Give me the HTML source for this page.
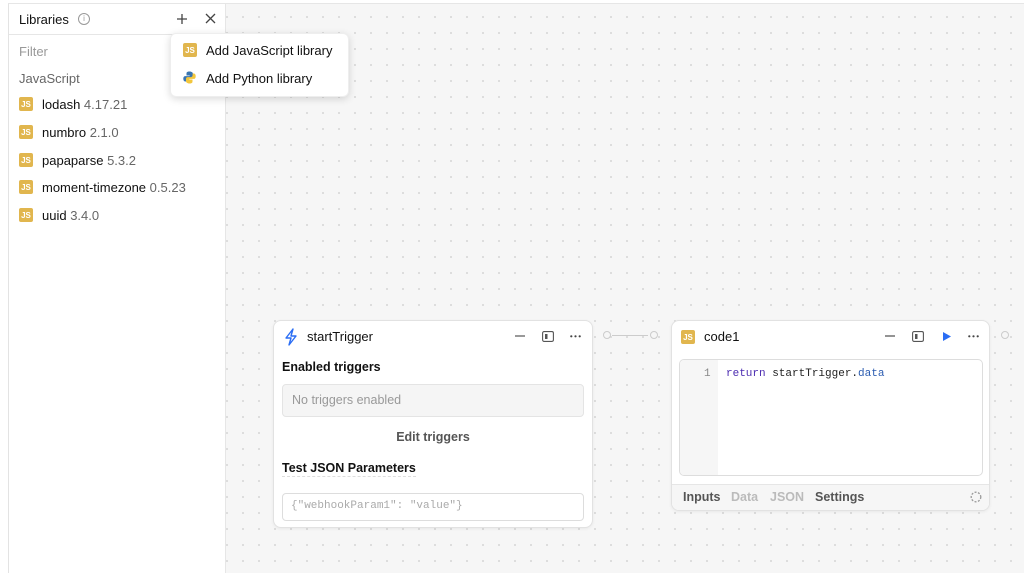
<!DOCTYPE html>
<html><head><meta charset="utf-8"><style>
*{box-sizing:border-box;margin:0;padding:0}
body{width:1024px;height:573px;overflow:hidden;background:#fff;font-family:"Liberation Sans",sans-serif;position:relative;color:#111}
.canvas{position:absolute;left:226px;top:3px;right:0;bottom:0;background-color:#f6f6f6;background-image:radial-gradient(circle,#d6d6d6 0.8px,transparent 1.1px);background-size:16px 16px;background-position:-7px 5px;border-top:1px solid #e6e6e6}
.panel{position:absolute;left:8px;top:3px;width:218px;bottom:0;background:#fff;border-left:1px solid #e3e3e3;border-top:1px solid #e6e6e6;border-right:1px solid #e6e6e6}
.ph{height:31px;border-bottom:1px solid #e6e6e6;position:relative}
.ph .t{position:absolute;left:10px;top:8px;font-size:13px}
.js{display:inline-block;width:14px;height:14px;background:#e1b64e;border-radius:2px;color:#fff;font-size:8px;font-weight:bold;text-align:center;line-height:15px;vertical-align:middle}
.li{position:absolute;left:10px;font-size:13px}
.li .js{margin-right:9px;margin-top:-3px}
.v{color:#666}
.menu{position:absolute;left:170px;top:33px;width:179px;height:64px;background:#fff;border-radius:6px;box-shadow:0 2px 8px rgba(0,0,0,.15);border:1px solid #eee}
.menu div{position:absolute;left:12px;font-size:13px}
.node{position:absolute;background:#fff;border:1px solid #e2e2e2;border-radius:8px;box-shadow:0 1px 3px rgba(0,0,0,.06)}
.abs{position:absolute}
</style></head><body>
<div class="canvas"></div>
<div class="panel">
 <div class="ph"><span class="t">Libraries</span>
  <span class="abs" style="left:69px;top:9px;width:12px;height:12px;border:1px solid #999;border-radius:50%;font-size:8px;color:#999;text-align:center;line-height:10px">i</span>
  <svg class="abs" style="left:167px;top:9px" width="12" height="12"><path d="M6 1v10M1 6h10" stroke="#444" stroke-width="1.3"/></svg>
  <svg class="abs" style="left:196px;top:9px" width="11" height="11"><path d="M1 1l9 9M10 1l-9 9" stroke="#444" stroke-width="1.3"/></svg>
 </div>
 <div class="li" style="top:40px;color:#999">Filter</div>
 <div class="li" style="top:67px;color:#666">JavaScript</div>
 <div class="li" style="top:93px"><span class="js">JS</span>lodash <span class="v">4.17.21</span></div>
 <div class="li" style="top:121px"><span class="js">JS</span>numbro <span class="v">2.1.0</span></div>
 <div class="li" style="top:149px"><span class="js">JS</span>papaparse <span class="v">5.3.2</span></div>
 <div class="li" style="top:176px"><span class="js">JS</span>moment-timezone <span class="v">0.5.23</span></div>
 <div class="li" style="top:204px"><span class="js">JS</span>uuid <span class="v">3.4.0</span></div>
</div>
<div class="menu">
 <div style="top:9px"><span class="js" style="margin-right:9px;margin-top:-3px">JS</span>Add JavaScript library</div>
 <div style="top:37px"><svg width="14" height="14" style="vertical-align:middle;margin-right:9px;margin-top:-3px"><path d="M6.5 0.5c-3 0-3 1.3-3 2.5v1.5h3.2v.6H2.2c-1.3 0-1.9 1.2-1.9 2.7s.7 2.7 1.9 2.7h1.2V8.8c0-1 .9-1.9 1.9-1.9h3.1c.9 0 1.6-.7 1.6-1.6V3c0-1.3-1.2-2.5-3.5-2.5z" fill="#3a75b0"/><path d="M6.5 12.5c3 0 3-1.3 3-2.5V8.5H6.3v-.6h4.5c1.3 0 1.9-1.2 1.9-2.7s-.7-2.7-1.9-2.7H9.6v1.7c0 1-.9 1.9-1.9 1.9H4.6c-.9 0-1.6.7-1.6 1.6V10c0 1.3 1.2 2.5 3.5 2.5z" fill="#f2c63c"/></svg>Add Python library</div>
</div>

<!-- startTrigger -->
<div class="node" style="left:273px;top:320px;width:320px;height:208px">
 <svg class="abs" style="left:9px;top:7px" width="16" height="18"><path d="M10 1L3 10h5l-2 7 7-9H8l2-7z" fill="none" stroke="#2a6df4" stroke-width="1.4" stroke-linejoin="round"/></svg>
 <div class="abs" style="left:33px;top:8px;font-size:13px">startTrigger</div>
 <svg class="abs" style="left:241px;top:14px" width="10" height="2"><path d="M0 1h10" stroke="#555" stroke-width="1.2"/></svg>
 <svg class="abs" style="left:268px;top:10px" width="12" height="11"><rect x=".6" y=".6" width="10.8" height="9.8" rx="1.5" fill="none" stroke="#555" stroke-width="1.1"/><rect x="3" y="3" width="2.5" height="5" fill="#555"/></svg>
 <svg class="abs" style="left:296px;top:14px" width="11" height="3"><circle cx="1.3" cy="1.3" r="1.1" fill="#444"/><circle cx="5.5" cy="1.3" r="1.1" fill="#444"/><circle cx="9.7" cy="1.3" r="1.1" fill="#444"/></svg>
 <div class="abs" style="left:8px;top:39px;font-size:12.5px;font-weight:bold">Enabled triggers</div>
 <div class="abs" style="left:8px;top:63px;width:302px;height:33px;background:#f5f5f5;border:1px solid #e4e4e4;border-radius:4px;font-size:12.5px;color:#999;padding:8px 9px">No triggers enabled</div>
 <div class="abs" style="left:0;width:318px;top:109px;text-align:center;font-size:12.5px;color:#555;font-weight:bold">Edit triggers</div>
 <div class="abs" style="left:8px;top:140px;font-size:12.5px;font-weight:bold;border-bottom:1px dashed #ddd;padding-bottom:1px">Test JSON Parameters</div>
 <div class="abs" style="left:8px;top:172px;width:302px;height:28px;border:1px solid #ddd;border-radius:4px;font-family:'Liberation Mono',monospace;font-size:11px;color:#aaa;padding:6px 8px">{"webhookParam1": "value"}</div>
</div>
<!-- connector -->
<div class="abs" style="left:603px;top:331px;width:8px;height:8px;border:1.5px solid #ccc;border-radius:50%;background:#f6f6f6"></div>
<div class="abs" style="left:612px;top:335px;width:36px;height:1px;background:#ccc"></div>
<div class="abs" style="left:650px;top:331px;width:8px;height:8px;border:1.5px solid #ccc;border-radius:50%;background:#f6f6f6"></div>
<div class="abs" style="left:1001px;top:331px;width:8px;height:8px;border:1.5px solid #ccc;border-radius:50%;background:#f6f6f6"></div>
<!-- code1 -->
<div class="node" style="left:671px;top:320px;width:319px;height:191px;overflow:hidden">
 <span class="js abs" style="left:9px;top:9px;width:14px;height:14px;line-height:15px">JS</span>
 <div class="abs" style="left:32px;top:8px;font-size:13px">code1</div>
 <svg class="abs" style="left:213px;top:14px" width="10" height="2"><path d="M0 1h10" stroke="#555" stroke-width="1.2"/></svg>
 <svg class="abs" style="left:240px;top:10px" width="12" height="11"><rect x=".6" y=".6" width="10.8" height="9.8" rx="1.5" fill="none" stroke="#555" stroke-width="1.1"/><rect x="3" y="3" width="2.5" height="5" fill="#555"/></svg>
 <svg class="abs" style="left:270px;top:10px" width="10" height="11"><path d="M1 1l8 4.5L1 10z" fill="#2a6df4"/></svg>
 <svg class="abs" style="left:296px;top:14px" width="11" height="3"><circle cx="1.3" cy="1.3" r="1.1" fill="#444"/><circle cx="5.5" cy="1.3" r="1.1" fill="#444"/><circle cx="9.7" cy="1.3" r="1.1" fill="#444"/></svg>
 <div class="abs" style="left:7px;top:38px;width:304px;height:117px;border:1px solid #ddd;border-radius:5px;background:#fff;overflow:hidden">
  <div class="abs" style="left:0;top:0;width:38px;height:100%;background:#f6f6f6"></div>
  <div class="abs" style="left:24px;top:8px;font-family:'Liberation Mono',monospace;font-size:11px;color:#888">1</div>
  <div class="abs" style="left:46px;top:8px;font-family:'Liberation Mono',monospace;font-size:11px;color:#222"><span style="color:#4b2bb0">return</span> startTrigger.<span style="color:#2a5bb0">data</span></div>
 </div>
 <div class="abs" style="left:0;top:163px;width:100%;height:28px;background:#f6f6f6;border-top:1px solid #e6e6e6"></div>
 <div class="abs" style="left:11px;top:169px;font-size:12.5px;font-weight:bold;color:#555">Inputs</div>
 <div class="abs" style="left:59px;top:169px;font-size:12.5px;font-weight:bold;color:#bbb">Data</div>
 <div class="abs" style="left:98px;top:169px;font-size:12.5px;font-weight:bold;color:#bbb">JSON</div>
 <div class="abs" style="left:143px;top:169px;font-size:12.5px;font-weight:bold;color:#555">Settings</div>
 <svg class="abs" style="left:298px;top:170px" width="12" height="12"><circle cx="6" cy="6" r="4.8" fill="none" stroke="#999" stroke-width="1.3" stroke-dasharray="2 1.5"/></svg>
</div>
</body></html>
